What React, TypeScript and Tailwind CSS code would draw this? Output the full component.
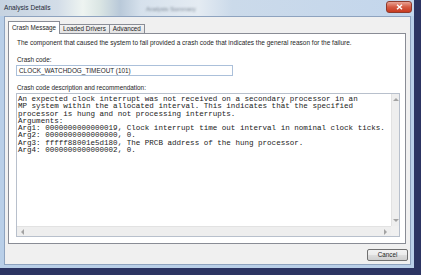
import React from 'react';

const ui = { fontFamily: '"Liberation Sans", Arial, sans-serif' };
const mono = { fontFamily: '"Liberation Mono", "Courier New", monospace' };

const LINES = [
  'An expected clock interrupt was not received on a secondary processor in an',
  'MP system within the allocated interval. This indicates that the specified',
  'processor is hung and not processing interrupts.',
  'Arguments:',
  'Arg1: 0000000000000019, Clock interrupt time out interval in nominal clock ticks.',
  'Arg2: 0000000000000000, 0.',
  'Arg3: fffff88001e5d180, The PRCB address of the hung processor.',
  'Arg4: 0000000000000002, 0.',
];

function Arrow({ dir }: { dir: 'up' | 'down' | 'left' | 'right' }) {
  const pts = {
    up: '0,3 3,0 6,3',
    down: '0,0 3,3 6,0',
    left: '3,0 0,3 3,6',
    right: '0,0 3,3 0,6',
  }[dir];
  const vert = dir === 'up' || dir === 'down';
  return (
    <svg width={vert ? 6 : 3} height={vert ? 3 : 6} viewBox={vert ? '0 0 6 3' : '0 0 3 6'}>
      <polygon points={pts} fill="#a3a3a3" />
    </svg>
  );
}

function Tab({ label, active }: { label: string; active?: boolean }) {
  return active ? (
    <div className="relative z-10 -mb-px h-[13px] bg-white border border-b-0 border-[#898c95] px-[3px] flex items-center text-[6.3px] text-[#1e1e1e]">
      {label}
    </div>
  ) : (
    <div className="h-[9px] border border-b-0 border-[#898c95] bg-gradient-to-b from-[#f3f3f3] to-[#e3e3e3] px-[3px] -ml-px first:ml-0 flex items-center text-[6.3px] text-[#1e1e1e]">
      {label}
    </div>
  );
}

export default function App() {
  return (
    <div className="w-[421px] h-[275px] bg-[#2c3462] overflow-hidden" style={ui}>
      <div className="w-[414px] h-[268px] flex flex-col bg-[#b9cfe8] pl-[4px] pr-[3px] pb-[3px]">
        {/* title bar */}
        <div className="relative h-[16px] -ml-[4px] -mr-[3px] pl-[4px] pr-[2px] flex justify-between bg-[linear-gradient(90deg,#c6d3e1_0%,#d3dde8_14%,#eef4f1_20%,#dbe6e4_24%,#b9c9d9_29%,#d6e1ec_34%,#e4ebf2_48%,#cbdaea_56%,#c3d6ec_100%)]">
          <span className="mt-[4px] text-[6.6px] leading-[8px] text-[#1f2a36]">Analysis Details</span>
          <span className="absolute left-[146px] top-[5px] text-[6px] text-[#7c8794] blur-[0.8px]">Analysis Summary</span>
          <div className="mt-[1px] w-[26px] h-[12px] rounded-[3px] border border-[#8e3b2d] bg-gradient-to-b from-[#e8a395] via-[#d45a43] to-[#c8391d] flex items-center justify-center">
            <svg width="7" height="6" viewBox="0 0 7 6">
              <path d="M1 0.8 L6 5.2 M6 0.8 L1 5.2" stroke="#fff" strokeWidth="1.5" />
            </svg>
          </div>
        </div>
        {/* client */}
        <div className="flex-1 flex flex-col bg-[#f0f0f0] border border-[#8ea3bf] pl-[3px] pt-[4px]">
          <div className="flex items-end h-[12px]">
            <Tab label="Crash Message" active />
            <Tab label="Loaded Drivers" />
            <Tab label="Advanced" />
          </div>
          <div className="w-[398px] h-[211px] bg-white border border-[#898c95] pl-[7px]">
            <p className="mt-[5px] text-[6.5px] leading-[8px] text-[#1e1e1e] pl-[1px] whitespace-nowrap">
              The component that caused the system to fail provided a crash code that indicates the general reason for the failure.
            </p>
            <p className="mt-[9px] text-[6.4px] leading-[8px] text-[#1e1e1e] pl-[1px]">Crash code:</p>
            <div className="mt-[1px] w-[217px] h-[11px] border border-[#abc0da] flex items-center pl-[2px] text-[6.4px] text-[#1e1e1e]">
              CLOCK_WATCHDOG_TIMEOUT (101)
            </div>
            <p className="mt-[8px] text-[6.4px] leading-[8px] text-[#1e1e1e] pl-[1px]">Crash code description and recommendation:</p>
            <div className="mt-[1px] w-[384px] h-[144px] border border-[#b8c0cc] grid grid-cols-[1fr_8px] grid-rows-[1fr_10px]">
              <div className="pt-[2px] pl-[1px] overflow-hidden text-[7.55px] leading-[7.3px] text-[#222]" style={mono}>
                {LINES.map((l) => (
                  <div key={l} className="whitespace-pre h-[7.3px]">{l}</div>
                ))}
              </div>
              <div className="bg-[#eeeeee] border-l border-[#e2e2e2] flex flex-col items-center justify-between py-[4px]">
                <Arrow dir="up" />
                <Arrow dir="down" />
              </div>
              <div className="bg-[#eeeeee] border-t border-[#e2e2e2] flex items-center justify-between px-[4px]">
                <Arrow dir="left" />
                <Arrow dir="right" />
              </div>
              <div className="bg-[#f0f0f0]" />
            </div>
          </div>
          <div className="flex justify-end pr-[2px] mt-[5px]">
            <button className="w-[41px] h-[12px] rounded-[2px] border border-[#707070] bg-[linear-gradient(180deg,#f2f2f2_0%,#ebebeb_50%,#dddddd_51%,#cfcfcf_100%)] text-[6.3px] text-[#1e1e1e] flex items-center justify-center">
              Cancel
            </button>
          </div>
        </div>
      </div>
    </div>
  );
}
